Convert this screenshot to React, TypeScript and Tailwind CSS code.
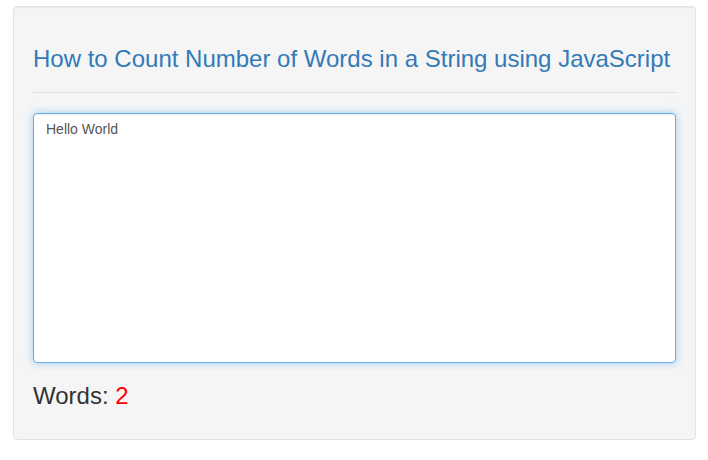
import React, { useState } from "react";

export default function App() {
  const [text, setText] = useState("Hello World");
  const count = text.trim() === "" ? 0 : text.trim().split(/\s+/).length;
  return (
    <div
      className="w-[708px] h-[460px] bg-white pt-[6px] pl-[13px]"
      style={{ fontFamily: '"Liberation Sans", Arial, Helvetica, sans-serif' }}
    >
      <div className="w-[683px] bg-[#f5f5f5] border border-[#e3e3e3] rounded-[4px] p-[19px] shadow-[inset_0_1px_1px_rgba(0,0,0,0.05)]">
        <div className="border-b border-dotted border-[#cccccc] pb-[10px] mb-[20px]">
          <h3 className="mt-[20px] mb-[10px] text-[24px] leading-[1.1] font-medium text-[#337ab7]">
            How to Count Number of Words in a String using JavaScript
          </h3>
        </div>
        <textarea
          value={text}
          onChange={(e) => setText(e.target.value)}
          className="block w-full h-[250px] px-[12px] py-[6px] text-[14px] leading-[1.42857] text-[#555555] bg-white border border-[#66afe9] rounded-[4px] outline-none resize-none shadow-[inset_0_1px_1px_rgba(0,0,0,0.075),0_0_8px_rgba(102,175,233,0.6)]"
          style={{ fontFamily: '"Liberation Sans", Arial, Helvetica, sans-serif' }}
        />
        <h3 className="mt-[20px] mb-[10px] text-[24px] leading-[1.1] font-medium text-[#333333]">
          Words: <span className="text-[#ff0000]">{count}</span>
        </h3>
      </div>
    </div>
  );
}
